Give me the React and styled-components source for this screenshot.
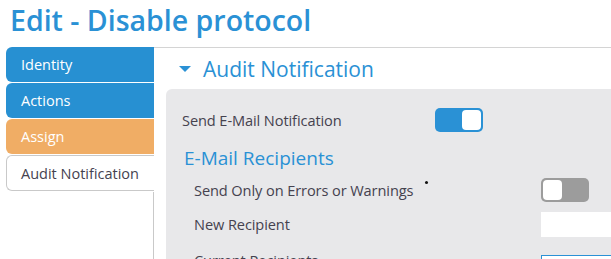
import React from 'react'
import styled, { createGlobalStyle } from 'styled-components'

const GlobalStyle = createGlobalStyle`
  html, body {
    margin: 0;
    padding: 0;
    background: #ffffff;
  }
  body {
    font-family: "Open Sans", "Noto Sans", sans-serif;
    overflow: hidden;
  }
`

const BLUE = '#2a91d5'
const TEXT = '#45424f'

const Page = styled.div`
  width: 611px;
  height: 259px;
  overflow: hidden;
  display: flex;
  flex-direction: column;
`

const Title = styled.h1`
  margin: 0;
  height: 47px;
  flex-shrink: 0;
  padding-left: 10px;
  font-size: 28.5px;
  line-height: 40px;
  font-weight: 600;
  color: ${BLUE};
  white-space: nowrap;
`

const Body = styled.div`
  flex: 1;
  display: flex;
  min-height: 0;
`

const TabColumn = styled.div`
  width: 148px;
  margin-left: 6px;
  display: flex;
  flex-direction: column;
  gap: 1px;
`

const Tab = styled.div`
  height: 35px;
  flex-shrink: 0;
  box-sizing: border-box;
  padding-left: 15px;
  display: flex;
  align-items: center;
  font-size: 14.5px;
  color: #ffffff;
  background: ${({ $color }) => $color};
  border-radius: 6px 0 0 6px;
  white-space: nowrap;
`

const ActiveTab = styled(Tab)`
  height: 36px;
  background: #ffffff;
  color: ${TEXT};
  border: 1px solid #c9c9c9;
  border-right: none;
  padding-left: 14px;
`

const TabFiller = styled.div`
  flex: 1;
  border-right: 1px solid #c9c9c9;
`

const Panel = styled.div`
  flex: 1;
  display: flex;
  flex-direction: column;
  border-top: 1px solid #d4d4d4;
  padding-left: 12px;
  min-width: 0;
`

const SectionHead = styled.div`
  height: 41px;
  flex-shrink: 0;
  display: flex;
  align-items: center;
  padding-left: 13px;
  gap: 12px;
  font-size: 21px;
  color: ${BLUE};
  white-space: nowrap;
`

const Caret = styled.span`
  width: 0;
  height: 0;
  border-left: 6px solid transparent;
  border-right: 6px solid transparent;
  border-top: 6px solid ${BLUE};
  margin-top: 1px;
`

const GrayBox = styled.div`
  flex: 1;
  min-height: 0;
  overflow: hidden;
  background: #e8e8ea;
  border-radius: 6px 0 0 0;
  padding: 19px 0 0 16px;
  position: relative;
`

const Row = styled.div`
  display: flex;
  align-items: ${({ $top }) => ($top ? 'flex-start' : 'center')};
  height: ${({ $h }) => $h || 34}px;
  padding-left: ${({ $indent }) => $indent || 0}px;
  margin-top: ${({ $mt }) => $mt || 0}px;
`

const Label = styled.div`
  width: ${({ $w }) => $w}px;
  flex-shrink: 0;
  font-size: 14.6px;
  color: ${TEXT};
  white-space: nowrap;
  letter-spacing: -0.1px;
`

const SubHead = styled.div`
  margin: 13px 0 2px 2px;
  font-size: 19px;
  line-height: 26px;
  color: ${BLUE};
  white-space: nowrap;
`

const Toggle = styled.div`
  width: 48px;
  height: 24px;
  box-sizing: border-box;
  border-radius: 5px;
  padding: 2px;
  display: flex;
  justify-content: ${({ $on }) => ($on ? 'flex-end' : 'flex-start')};
  background: ${({ $on }) => ($on ? BLUE : '#9c9c9c')};
  flex-shrink: 0;
`

const Knob = styled.div`
  width: 19px;
  height: 20px;
  border-radius: 4px;
  background: #ffffff;
`

const Input = styled.div`
  flex: 1;
  height: 25px;
  box-sizing: border-box;
  background: #ffffff;
  border: 1px solid ${({ $focus }) => ($focus ? BLUE : '#ffffff')};
  border-right: none;
  margin-top: ${({ $mt }) => $mt || 0}px;
`

const Speck = styled.span`
  position: absolute;
  left: 259px;
  top: 92px;
  width: 3px;
  height: 3px;
  border-radius: 50%;
  background: #111;
`

export default function App() {
  return (
    <Page>
      <GlobalStyle />
      <Title>Edit - Disable protocol</Title>
      <Body>
        <TabColumn>
          <Tab $color="#2790d2">Identity</Tab>
          <Tab $color="#2790d2">Actions</Tab>
          <Tab $color="#f0ad65">Assign</Tab>
          <ActiveTab>Audit Notification</ActiveTab>
          <TabFiller />
        </TabColumn>
        <Panel>
          <SectionHead>
            <Caret />
            Audit Notification
          </SectionHead>
          <GrayBox>
            <Speck />
            <Row $h={24}>
              <Label $w={253}>Send E-Mail Notification</Label>
              <Toggle $on>
                <Knob />
              </Toggle>
            </Row>
            <SubHead>E-Mail Recipients</SubHead>
            <Row $indent={12}>
              <Label $w={347}>Send Only on Errors or Warnings</Label>
              <Toggle>
                <Knob />
              </Toggle>
            </Row>
            <Row $indent={12}>
              <Label $w={347}>New Recipient</Label>
              <Input />
            </Row>
            <Row $indent={12} $h={40} $mt={9} $top>
              <Label $w={347}>Current Recipients</Label>
              <Input $focus $mt={5} />
            </Row>
          </GrayBox>
        </Panel>
      </Body>
    </Page>
  )
}
